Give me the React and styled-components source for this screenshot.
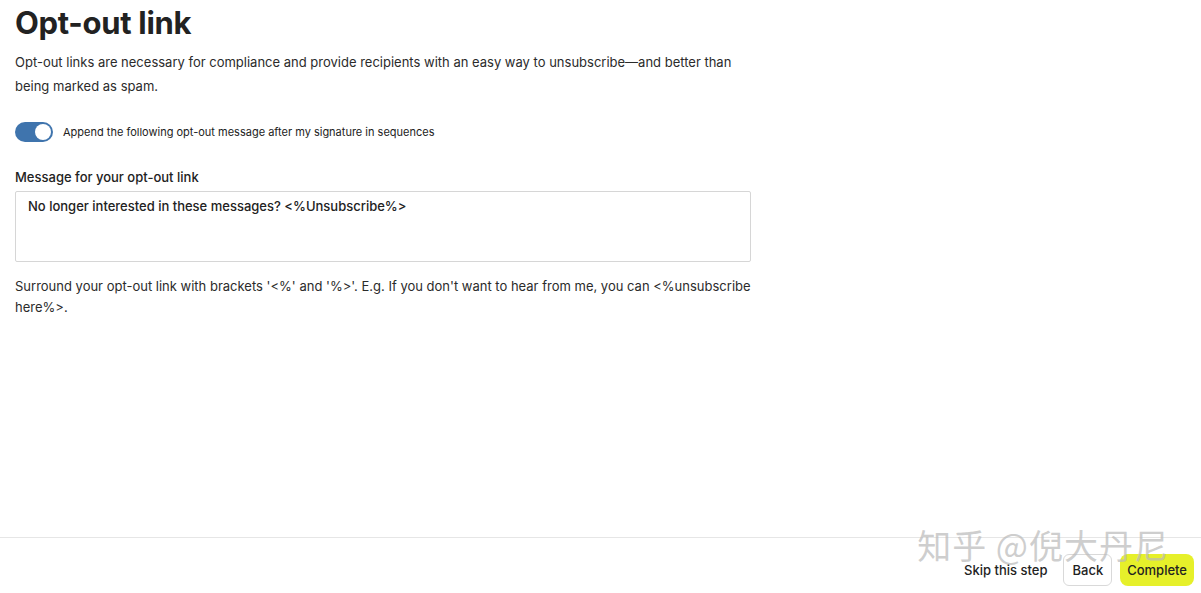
import React, { useState } from 'react';
import styled, { createGlobalStyle } from 'styled-components';

const GlobalStyle = createGlobalStyle`
    html, body {
        margin: 0;
        padding: 0;
        background: #ffffff;
    }
    body {
        font-family: Inter, "Noto Sans", sans-serif;
        color: #1f1f1f;
    }
`;

export default function App(){
    const [enabled, setEnabled] = useState(true);
    const [message, setMessage] = useState('No longer interested in these messages? <%Unsubscribe%>');

    return(
        <Page>
            <GlobalStyle />
            <Content>
                <Title>Opt-out link</Title>
                <Intro>
                    Opt-out links are necessary for compliance and provide recipients with an easy way to unsubscribe—and better than being marked as spam.
                </Intro>
                <ToggleRow>
                    <Toggle on={enabled} onClick={() => setEnabled(!enabled)}>
                        <Knob on={enabled} />
                    </Toggle>
                    <ToggleLabel>Append the following opt-out message after my signature in sequences</ToggleLabel>
                </ToggleRow>
                <FieldLabel>Message for your opt-out link</FieldLabel>
                <MessageBox value={message} onChange={(e) => setMessage(e.target.value)} />
                <Helper>
                    Surround your opt-out link with brackets '&lt;%' and '%&gt;'. E.g. If you don't want to hear from me, you can &lt;%unsubscribe here%&gt;.
                </Helper>
            </Content>
            <Footer>
                <Watermark>知乎 @倪大丹尼</Watermark>
                <SkipButton>Skip this step</SkipButton>
                <BackButton>Back</BackButton>
                <CompleteButton>Complete</CompleteButton>
            </Footer>
        </Page>
    );
}

const Page = styled.div`
    width: 100%;
    height: 593px;
    display: flex;
    flex-direction: column;
    overflow: hidden;
`;

const Content = styled.div`
    flex: 1;
    width: 736px;
    padding: 0 15px;
`;

const Title = styled.h1`
    margin: 4px 0 0;
    font-size: 31px;
    line-height: 38px;
    font-weight: 700;
    color: #222;
    letter-spacing: -0.3px;
`;

const Intro = styled.p`
    margin: 8px 0 0;
    font-size: 13px;
    line-height: 24px;
    color: #2b2b2b;
`;

const ToggleRow = styled.div`
    display: flex;
    align-items: center;
    gap: 10px;
    margin-top: 24px;
`;

const Toggle = styled.button`
    width: 38px;
    height: 20px;
    border: none;
    border-radius: 10px;
    padding: 0 2px;
    background: ${props => props.on ? '#3f74ad' : '#c7c7c7'};
    display: flex;
    align-items: center;
    justify-content: ${props => props.on ? 'flex-end' : 'flex-start'};
    cursor: pointer;
`;

const Knob = styled.span`
    width: 16px;
    height: 16px;
    border-radius: 50%;
    background: #fff;
`;

const ToggleLabel = styled.span`
    font-size: 11px;
    color: #222;
`;

const FieldLabel = styled.div`
    margin-top: 26px;
    font-size: 13px;
    font-weight: 500;
    color: #222;
    line-height: 18px;
`;

const MessageBox = styled.textarea`
    display: block;
    box-sizing: border-box;
    width: 736px;
    height: 71px;
    margin-top: 5px;
    padding: 5px 12px;
    border: 1px solid #d6d6d6;
    border-radius: 2px;
    font-family: Inter, "Noto Sans", sans-serif;
    font-size: 13px;
    font-weight: 500;
    line-height: 18px;
    color: #222;
    resize: none;
    outline: none;
`;

const Helper = styled.p`
    margin: 14px 0 0;
    font-size: 13px;
    line-height: 21px;
    color: #2b2b2b;
`;

const Footer = styled.div`
    position: relative;
    box-sizing: border-box;
    height: 56px;
    padding: 8px 7px 0 0;
    border-top: 1px solid #e6e6e6;
    display: flex;
    align-items: center;
    justify-content: flex-end;
    gap: 8px;
`;

const Watermark = styled.span`
    position: absolute;
    right: 32px;
    top: -18px;
    font-size: 34px;
    letter-spacing: 1px;
    color: rgba(185, 185, 185, 0.7);
    font-family: "Noto Sans CJK SC", sans-serif;
    pointer-events: none;
`;

const SkipButton = styled.button`
    background: none;
    border: none;
    font-family: Inter, "Noto Sans", sans-serif;
    font-size: 13px;
    font-weight: 500;
    color: #222;
    padding: 0 8px;
    height: 32px;
    cursor: pointer;
`;

const BackButton = styled.button`
    height: 32px;
    padding: 0 8px;
    border: 1px solid #d9d9d9;
    border-radius: 6px;
    background: #fff;
    font-family: Inter, "Noto Sans", sans-serif;
    font-size: 13px;
    font-weight: 500;
    color: #222;
    cursor: pointer;
`;

const CompleteButton = styled.button`
    height: 32px;
    padding: 0 7px;
    border: none;
    border-radius: 8px;
    background: #e6f02a;
    font-family: Inter, "Noto Sans", sans-serif;
    font-size: 13px;
    font-weight: 500;
    color: #222;
    cursor: pointer;
`;
